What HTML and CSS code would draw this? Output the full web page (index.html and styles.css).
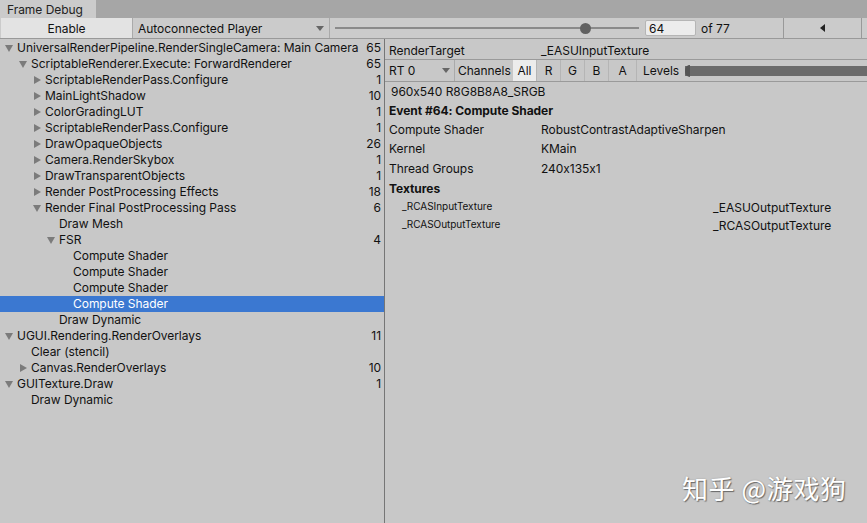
FILE: index.html
```html
<!DOCTYPE html>
<html>
<head>
<meta charset="utf-8">
<link rel="stylesheet" href="styles.css">
</head>
<body>
<div class="window">
  <div class="tabbar"><div class="tab">Frame Debug</div></div>
  <div class="toolbar">
    <div class="btn-enable">Enable</div>
    <div class="dropdown"><span>Autoconnected Player</span><span class="caret"></span></div>
    <div class="slider"><div class="track"></div><div class="knob"></div></div>
    <div class="numfield">64</div>
    <div class="oftext">of 77</div>
    <div class="navbtn"><span class="leftarrow"></span></div>
    <div class="navrest"></div>
  </div>
  <div class="main">
    <div class="tree">
      <div class="row l0"><span class="arr down"></span><span class="name">UniversalRenderPipeline.RenderSingleCamera: Main Camera</span><span class="cnt">65</span></div>
      <div class="row l1"><span class="arr down"></span><span class="name">ScriptableRenderer.Execute: ForwardRenderer</span><span class="cnt">65</span></div>
      <div class="row l2"><span class="arr right"></span><span class="name">ScriptableRenderPass.Configure</span><span class="cnt">1</span></div>
      <div class="row l2"><span class="arr right"></span><span class="name">MainLightShadow</span><span class="cnt">10</span></div>
      <div class="row l2"><span class="arr right"></span><span class="name">ColorGradingLUT</span><span class="cnt">1</span></div>
      <div class="row l2"><span class="arr right"></span><span class="name">ScriptableRenderPass.Configure</span><span class="cnt">1</span></div>
      <div class="row l2"><span class="arr right"></span><span class="name">DrawOpaqueObjects</span><span class="cnt">26</span></div>
      <div class="row l2"><span class="arr right"></span><span class="name">Camera.RenderSkybox</span><span class="cnt">1</span></div>
      <div class="row l2"><span class="arr right"></span><span class="name">DrawTransparentObjects</span><span class="cnt">1</span></div>
      <div class="row l2"><span class="arr right"></span><span class="name">Render PostProcessing Effects</span><span class="cnt">18</span></div>
      <div class="row l2"><span class="arr down"></span><span class="name">Render Final PostProcessing Pass</span><span class="cnt">6</span></div>
      <div class="row l3"><span class="arr"></span><span class="name">Draw Mesh</span><span class="cnt"></span></div>
      <div class="row l3"><span class="arr down"></span><span class="name">FSR</span><span class="cnt">4</span></div>
      <div class="row l4"><span class="arr"></span><span class="name">Compute Shader</span><span class="cnt"></span></div>
      <div class="row l4"><span class="arr"></span><span class="name">Compute Shader</span><span class="cnt"></span></div>
      <div class="row l4"><span class="arr"></span><span class="name">Compute Shader</span><span class="cnt"></span></div>
      <div class="row l4 selected"><span class="arr"></span><span class="name">Compute Shader</span><span class="cnt"></span></div>
      <div class="row l3"><span class="arr"></span><span class="name">Draw Dynamic</span><span class="cnt"></span></div>
      <div class="row l0"><span class="arr down"></span><span class="name">UGUI.Rendering.RenderOverlays</span><span class="cnt">11</span></div>
      <div class="row l1"><span class="arr"></span><span class="name">Clear (stencil)</span><span class="cnt"></span></div>
      <div class="row l1"><span class="arr right"></span><span class="name">Canvas.RenderOverlays</span><span class="cnt">10</span></div>
      <div class="row l0"><span class="arr down"></span><span class="name">GUITexture.Draw</span><span class="cnt">1</span></div>
      <div class="row l1"><span class="arr"></span><span class="name">Draw Dynamic</span><span class="cnt"></span></div>
    </div>
    <div class="detail">
      <div class="rt-row"><span class="lbl">RenderTarget</span><span>_EASUInputTexture</span></div>
      <div class="ch-row">
        <div class="rtsel"><span>RT 0</span><span class="caret"></span></div>
        <div class="chlabel">Channels</div>
        <div class="chbtn on">All</div>
        <div class="chbtn">R</div>
        <div class="chbtn">G</div>
        <div class="chbtn">B</div>
        <div class="chbtn wide">A</div>
        <div class="levels">Levels</div>
        <div class="levelbar"><span class="handle"></span></div>
      </div>
      <div class="info">
        <div class="d-row fmt">960x540 R8G8B8A8_SRGB</div>
        <div class="d-row ev bold">Event #64: Compute Shader</div>
        <div class="d-row p1"><span class="lbl">Compute Shader</span><span>RobustContrastAdaptiveSharpen</span></div>
        <div class="d-row p2"><span class="lbl">Kernel</span><span>KMain</span></div>
        <div class="d-row p2"><span class="lbl">Thread Groups</span><span>240x135x1</span></div>
        <div class="d-row p2 bold">Textures</div>
        <div class="d-row tex t1"><span class="tlbl">_RCASInputTexture</span><span>_EASUOutputTexture</span></div>
        <div class="d-row tex t2"><span class="tlbl">_RCASOutputTexture</span><span>_RCASOutputTexture</span></div>
      </div>
    </div>
  </div>
  <div class="watermark">知乎 @游戏狗</div>
</div>
</body>
</html>
```
FILE: styles.css
```css
html, body {
  margin: 0;
  padding: 0;
}
body {
  width: 867px;
  height: 523px;
  overflow: hidden;
  background: #c8c8c8;
  font-family: Inter, "Noto Sans", sans-serif;
  font-size: 12px;
  font-feature-settings: "calt" 0;
  letter-spacing: -0.04px;
  color: #111;
}
.window {
  position: relative;
  width: 867px;
  height: 523px;
  display: flex;
  flex-direction: column;
}
.tabbar {
  height: 18px;
  background: #a6a6a6;
  display: flex;
  flex: none;
}
.tab {
  width: 89px;
  padding-left: 7px;
  background: #cbcbcb;
  line-height: 19px;
  height: 18px;
  color: #222;
}
.toolbar {
  height: 20px;
  flex: none;
  display: flex;
  align-items: stretch;
  background: #cbcbcb;
  border-bottom: 1px solid #999;
}
.btn-enable {
  width: 131px;
  margin-left: 1px;
  background: #e3e3e3;
  border-right: 1px solid #aaa;
  text-align: center;
  line-height: 21px;
}
.dropdown {
  width: 186px;
  padding-left: 5px;
  display: flex;
  align-items: center;
  justify-content: space-between;
  border-right: 1px solid #aaa;
  padding-right: 5px;
  line-height: 21px;
}
.caret {
  width: 0;
  height: 0;
  border-left: 4px solid transparent;
  border-right: 4px solid transparent;
  border-top: 5px solid #666;
}
.slider {
  position: relative;
  width: 308px;
  margin-left: 3px;
}
.track {
  position: absolute;
  left: 2px;
  right: 2px;
  top: 9px;
  height: 2px;
  background: #8a8a8a;
}
.knob {
  position: absolute;
  left: 247px;
  top: 5px;
  width: 11px;
  height: 11px;
  border-radius: 50%;
  background: #616161;
}
.numfield {
  margin: 2px 0 2px 4px;
  width: 46px;
  padding-left: 3px;
  background: #ececec;
  border: 1px solid #b5b5b5;
  border-radius: 2px;
  line-height: 15px;
}
.oftext {
  margin-left: 5px;
  width: 82px;
  line-height: 21px;
}
.navbtn {
  width: 77px;
  border-left: 1px solid #999;
  border-right: 1px solid #999;
  display: flex;
  align-items: center;
  justify-content: center;
}
.leftarrow {
  width: 0;
  height: 0;
  border-top: 4px solid transparent;
  border-bottom: 4px solid transparent;
  border-right: 5px solid #222;
}
.navrest {
  flex: 1;
}
.main {
  flex: 1;
  display: flex;
  min-height: 0;
}
.tree {
  width: 384px;
  flex: none;
  padding-top: 1px;
  border-right: 1px solid #767676;
}
.row {
  height: 16px;
  display: flex;
  align-items: center;
  padding-right: 3px;
  white-space: nowrap;
}
.row.selected {
  background: #3b78d1;
  color: #fff;
}
.l0 { padding-left: 4px; }
.l1 { padding-left: 18px; }
.l2 { padding-left: 32px; }
.l3 { padding-left: 46px; }
.l4 { padding-left: 60px; }
.arr {
  width: 13px;
  height: 16px;
  flex: none;
  position: relative;
}
.arr.down::before {
  content: "";
  position: absolute;
  left: 1px;
  top: 5px;
  border-left: 4px solid transparent;
  border-right: 4px solid transparent;
  border-top: 7px solid #7b7b7b;
}
.arr.right::before {
  content: "";
  position: absolute;
  left: 2px;
  top: 4px;
  border-top: 4px solid transparent;
  border-bottom: 4px solid transparent;
  border-left: 7px solid #7b7b7b;
}
.name {
  flex: 1;
  line-height: 16px;
}
.cnt {
  text-align: right;
  line-height: 16px;
}
.detail {
  flex: 1;
  display: flex;
  flex-direction: column;
}
.rt-row {
  height: 17px;
  padding-top: 3px;
  line-height: 17px;
  padding-left: 4px;
  display: flex;
  border-bottom: 1px solid #9a9a9a;
}
.lbl {
  width: 152px;
  flex: none;
}
.ch-row {
  height: 21px;
  display: flex;
  align-items: stretch;
  border-bottom: 1px solid #9a9a9a;
  line-height: 22px;
}
.rtsel {
  width: 61px;
  padding: 0 4px 0 4px;
  display: flex;
  align-items: center;
  justify-content: space-between;
  border-right: 1px solid #aaa;
}
.chlabel {
  padding-left: 3px;
  width: 55px;
}
.chbtn {
  width: 23px;
  text-align: center;
  border-right: 1px solid #b5b5b5;
}
.chbtn.wide {
  width: 27px;
}
.chbtn.on {
  background: #ececec;
}
.levels {
  margin-left: 6px;
  width: 42px;
}
.levelbar {
  flex: 1;
  margin: 6px 0 5px 0;
  background: #6b6b6b;
  position: relative;
}
.handle {
  position: absolute;
  left: 0;
  top: -1px;
  width: 5px;
  height: 12px;
  border-radius: 5px 0 0 5px;
  background: #555;
}
.info {
  padding-left: 4px;
}
.d-row {
  display: flex;
  align-items: baseline;
  white-space: nowrap;
}
.fmt { height: 20px; line-height: 20px; padding-left: 2px; }
.ev { height: 18px; line-height: 18px; }
.p1 { height: 19px; line-height: 19px; }
.p2 { height: 20px; line-height: 20px; }
.bold { font-weight: 700; }
.t1 { height: 17px; line-height: 17px; }
.t2 { height: 20px; line-height: 20px; }
.tlbl {
  width: 311px;
  padding-left: 13px;
  flex: none;
  font-size: 10px;
  position: relative;
  top: -2px;
}
.watermark {
  position: absolute;
  left: 682px;
  top: 469px;
  font-family: "Noto Sans CJK SC", sans-serif;
  font-size: 26px;
  letter-spacing: 0.6px;
  color: #fff;
  text-shadow: 1px 1px 1px rgba(0,0,0,0.45), 0 0 2px rgba(0,0,0,0.2);
  white-space: nowrap;
}
```
